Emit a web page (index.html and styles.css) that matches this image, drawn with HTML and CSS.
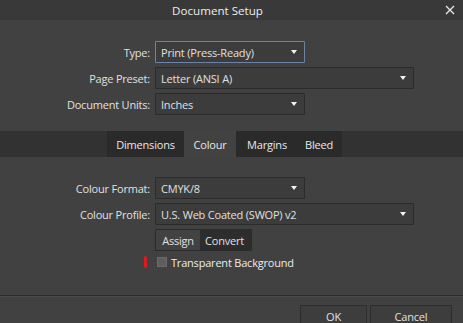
FILE: index.html
```html
<!DOCTYPE html>
<html lang="en">
<head>
    <meta charset="UTF-8">
    <meta name="viewport" content="width=device-width, initial-scale=1.0">
    <title>Document Setup</title>
    <link rel="stylesheet" href="styles.css">
</head>
<body>
    <div class="dialog">
        <div class="titlebar">
            <span class="title">Document Setup</span>
            <svg class="close" width="10" height="10" viewBox="0 0 10 10">
                <path d="M1 1 L9 9 M9 1 L1 9" stroke="#e8e8e8" stroke-width="1.3"/>
            </svg>
        </div>

        <div class="section top">
            <div class="row">
                <span class="label">Type:</span>
                <div class="select narrow focused">Print (Press-Ready)<i class="arrow"></i></div>
            </div>
            <div class="row">
                <span class="label">Page Preset:</span>
                <div class="select wide">Letter (ANSI A)<i class="arrow"></i></div>
            </div>
            <div class="row">
                <span class="label">Document Units:</span>
                <div class="select narrow">Inches<i class="arrow"></i></div>
            </div>
        </div>

        <div class="tabbar">
            <div class="tabs">
                <span class="tab dimensions">Dimensions</span>
                <span class="tab colour active">Colour</span>
                <span class="tab margins">Margins</span>
                <span class="tab bleed">Bleed</span>
            </div>
        </div>

        <div class="section colour">
            <div class="row">
                <span class="label">Colour Format:</span>
                <div class="select narrow">CMYK/8<i class="arrow"></i></div>
            </div>
            <div class="row">
                <span class="label">Colour Profile:</span>
                <div class="select wide">U.S. Web Coated (SWOP) v2<i class="arrow"></i></div>
            </div>
            <div class="row">
                <span class="label"></span>
                <div class="segmented">
                    <span class="seg assign">Assign</span>
                    <span class="seg dark">Convert</span>
                </div>
            </div>
            <div class="row check-row">
                <span class="label"><i class="marker"></i></span>
                <label class="check"><i class="box"></i>Transparent Background</label>
            </div>
        </div>

        <div class="footer">
            <span class="button ok">OK</span>
            <span class="button">Cancel</span>
        </div>
    </div>
</body>
</html>
```

FILE: styles.css
```css
html, body {
    margin: 0;
    padding: 0;
    background-color: #414141;
    overflow: hidden;
}
.dialog {
    width: 463px;
    height: 323px;
    overflow: hidden;
    font-family: "Open Sans", "Noto Sans", sans-serif;
    font-size: 11px;
    letter-spacing: -0.2px;
    color: #e0e0e0;
    background-color: #414141;
    display: flex;
    flex-direction: column;
}
.titlebar {
    flex-shrink: 0;
    height: 20px;
    background-color: #393939;
    display: flex;
    align-items: center;
    justify-content: center;
    padding-right: 28px;
    position: relative;
}
.title {
    font-size: 11.6px;
    letter-spacing: 0;
    color: #ececec;
}
.close {
    position: absolute;
    right: 8px;
    top: 5px;
}
.section {
    flex-shrink: 0;
    display: flex;
    flex-direction: column;
    gap: 4px;
}
.section.top {
    padding-top: 21px;
}
.section.colour {
    padding-top: 20px;
}
.row {
    display: flex;
    align-items: center;
    height: 22px;
}
.label {
    width: 155px;
    padding-right: 5px;
    box-sizing: border-box;
    display: flex;
    justify-content: flex-end;
    align-items: center;
}
.select {
    height: 22px;
    box-sizing: border-box;
    border: 1px solid #2b2b2b;
    background-color: #3c3c3c;
    border-radius: 1px;
    padding: 0 5px;
    display: flex;
    align-items: center;
    position: relative;
}
.select.narrow {
    width: 150px;
}
.select.wide {
    width: 259px;
}
.select.focused {
    border-color: #6c82a6;
}
.arrow {
    position: absolute;
    right: 7px;
    top: 8px;
    width: 0;
    height: 0;
    border-left: 3px solid transparent;
    border-right: 3px solid transparent;
    border-top: 4px solid #f2f2f2;
}
.tabbar {
    flex-shrink: 0;
    margin-top: 16px;
    height: 26px;
    background-color: #323232;
    display: flex;
    padding-left: 107px;
}
.tabs {
    display: flex;
    background-color: #2a2a2a;
}
.tab {
    display: flex;
    align-items: center;
    justify-content: center;
    color: #e8e8e8;
}
.tab.dimensions {
    width: 77px;
}
.tab.colour {
    width: 52px;
}
.tab.margins {
    width: 62px;
}
.tab.bleed {
    width: 44px;
    justify-content: flex-start;
    padding-left: 7px;
    box-sizing: border-box;
}
.tab.active {
    background-color: #424242;
}
.segmented {
    display: flex;
    height: 22px;
    border: 1px solid #2b2b2b;
    box-sizing: border-box;
}
.seg {
    display: flex;
    align-items: center;
    padding: 0 7px 0 5px;
    background-color: #424242;
}
.seg.assign {
    width: 44px;
    justify-content: center;
    padding: 0;
}
.seg.dark {
    background-color: #2d2d2d;
}
.check-row {
    margin-top: 1px;
    height: 12px;
}
.marker {
    display: block;
    width: 3px;
    height: 12px;
    background-color: #e01b1b;
    border-radius: 2px;
    margin-right: 3px;
}
.check {
    display: flex;
    align-items: center;
    color: #ececec;
}
.box {
    display: block;
    width: 8px;
    height: 8px;
    margin: 0 4px 0 2px;
    background-color: #5e5e5e;
    border: 1px solid #6a6a6a;
}
.footer {
    flex-shrink: 0;
    margin-top: 27px;
    height: 40px;
    border-top: 1px solid #2c2c2c;
    box-shadow: inset 0 1px 0 #4a4a4a;
    display: flex;
    justify-content: flex-end;
    gap: 3px;
    padding: 9px 11px 0 0;
}
.button {
    width: 82px;
    height: 22px;
    box-sizing: border-box;
    border: 1px solid #2c2c2c;
    background-color: #3d3d3d;
    display: flex;
    align-items: center;
    justify-content: center;
}
.button.ok {
    width: 67px;
}
```
